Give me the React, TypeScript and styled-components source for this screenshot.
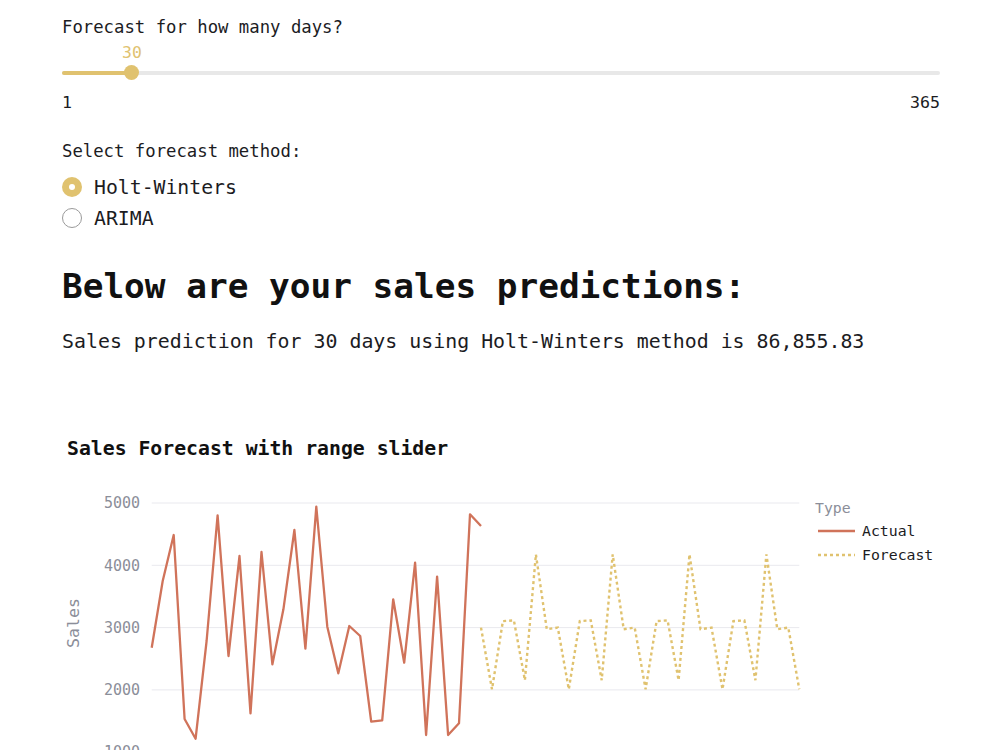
import * as React from 'react';
import styled, { createGlobalStyle } from 'styled-components';

const GOLD = '#e0c26f';
const RUST = '#d0735a';
const MONO = `'DejaVu Sans Mono', 'Liberation Mono', monospace`;

const GlobalStyle = createGlobalStyle`
  html, body {
    margin: 0;
    padding: 0;
    background: #ffffff;
    font-family: ${MONO};
    color: #1c1c1f;
  }
`;

const Main = styled.main`
  box-sizing: border-box;
  width: 1000px;
  padding: 0 60px 0 62px;
`;

const WidgetLabel = styled.div<{ $top: number }>`
  margin-top: ${p => p.$top}px;
  font-size: 17.3px;
  line-height: 22px;
  height: 22px;
  white-space: nowrap;
`;

const SliderArea = styled.div`
  position: relative;
  height: 54px;
  padding-top: 33px;
  box-sizing: border-box;
`;

const Track = styled.div`
  height: 4px;
  border-radius: 2px;
  background: #e8e8e8;
  display: flex;
`;

const TrackFill = styled.div`
  height: 100%;
  border-radius: 2px;
  background: ${GOLD};
`;

const Thumb = styled.div`
  position: absolute;
  top: 27px;
  width: 15px;
  height: 15px;
  margin-left: -7.5px;
  border-radius: 50%;
  background: ${GOLD};
`;

const ThumbValue = styled.div`
  position: absolute;
  top: 5px;
  transform: translateX(-50%);
  font-size: 16.4px;
  line-height: 20px;
  color: ${GOLD};
`;

const MinMax = styled.div`
  display: flex;
  justify-content: space-between;
  font-size: 16.6px;
  line-height: 20px;
  padding-top: 1px;
`;

const RadioGroup = styled.div`
  margin-top: 9.5px;
  display: flex;
  flex-direction: column;
`;

const RadioRow = styled.label`
  display: flex;
  align-items: center;
  height: 31px;
  gap: 12px;
  font-size: 19.8px;
`;

const RadioDot = styled.span<{ $checked: boolean }>`
  box-sizing: border-box;
  width: 20px;
  height: 20px;
  border-radius: 50%;
  display: flex;
  align-items: center;
  justify-content: center;
  border: ${p => (p.$checked ? 'none' : '1px solid #9a9a9a')};
  background: ${p => (p.$checked ? GOLD : '#ffffff')};
  &::after {
    content: '';
    display: ${p => (p.$checked ? 'block' : 'none')};
    width: 6px;
    height: 6px;
    border-radius: 50%;
    background: #ffffff;
  }
`;

const Heading = styled.h2`
  margin: 30.5px 0 0;
  font-size: 34.4px;
  line-height: 44px;
  font-weight: 700;
  color: #111111;
  white-space: nowrap;
`;

const Result = styled.p`
  margin: 20px 0 0;
  font-size: 19.9px;
  line-height: 28px;
  white-space: nowrap;
`;

const ChartTitle = styled.div`
  margin-top: 80px;
  padding-left: 5px;
  font-size: 19.8px;
  line-height: 26px;
  font-weight: 700;
  color: #111111;
`;

const ChartSvg = styled.svg`
  display: block;
  overflow: visible;
  font-family: ${MONO};
`;

const actual = [
  2677, 3748, 4486, 1533, 1217, 2785, 4803, 2544, 4149, 1624, 4213, 2411, 3294, 4567, 2661,
  4941, 3014, 2266, 3026, 2865, 1490, 1512, 3454, 2437, 4042, 1276, 3817, 1276, 1464, 4819, 4631,
];
const season = [3000, 2010, 3105, 3115, 2155, 4175, 2975];
const forecast = Array.from({ length: 30 }, (_, i) => season[i % 7]);

const LEFT = 89.7;
const RIGHT = 737.3;
const STEP = (RIGHT - LEFT) / 59;
const TOP = 41;
const PER = 0.0623;

const sx = (i: number) => LEFT + i * STEP;
const sy = (v: number) => TOP + (5000 - v) * PER;

const toPoints = (vals: number[], start: number) =>
  vals.map((v, i) => `${sx(start + i).toFixed(1)},${sy(v).toFixed(1)}`).join(' ');

const SalesChart = () => {
  const ticks = [5000, 4000, 3000, 2000, 1000];
  return (
    <ChartSvg width={878} height={300}>
      {ticks.map(t => (
        <g key={t}>
          <line x1={LEFT} x2={RIGHT} y1={sy(t)} y2={sy(t)} stroke="#e9e9ee" strokeWidth={1} />
          <text x={78} y={sy(t)} dy="0.35em" textAnchor="end" fontSize={15} fill="#8b8e99">
            {t}
          </text>
        </g>
      ))}
      <text
        x={11}
        y={161}
        transform="rotate(-90 11 161)"
        textAnchor="middle"
        dy="0.35em"
        fontSize={16.6}
        fill="#8b8e99"
      >
        Sales
      </text>
      <polyline points={toPoints(actual, 0)} fill="none" stroke={RUST} strokeWidth={2.3} strokeLinejoin="round" />
      <polyline
        points={toPoints(forecast, 30)}
        fill="none"
        stroke={GOLD}
        strokeWidth={2.4}
        strokeDasharray="3,3"
      />
      <g fontSize={14.8}>
        <text x={753} y={46} dy="0.35em" fill="#8b8e99">Type</text>
        <line x1={756} x2={793} y1={69} y2={69} stroke={RUST} strokeWidth={2.3} />
        <text x={800} y={69} dy="0.35em" fill="#1c1c1f">Actual</text>
        <line x1={756} x2={793} y1={93} y2={93} stroke={GOLD} strokeWidth={2.4} strokeDasharray="3,3" />
        <text x={800} y={93} dy="0.35em" fill="#1c1c1f">Forecast</text>
      </g>
    </ChartSvg>
  );
};

const DaysSlider = ({ value, min, max }: { value: number; min: number; max: number }) => {
  const pct = ((value - min) / (max - min)) * 100;
  return (
    <>
      <SliderArea>
        <ThumbValue style={{ left: `${pct}%` }}>{value}</ThumbValue>
        <Track>
          <TrackFill style={{ width: `${pct}%` }} />
        </Track>
        <Thumb style={{ left: `${pct}%` }} />
      </SliderArea>
      <MinMax>
        <span>{min}</span>
        <span>{max}</span>
      </MinMax>
    </>
  );
};

export default function App() {
  const methods = ['Holt-Winters', 'ARIMA'];
  return (
    <>
      <GlobalStyle />
      <Main>
        <WidgetLabel $top={16}>Forecast for how many days?</WidgetLabel>
        <DaysSlider value={30} min={1} max={365} />
        <WidgetLabel $top={27}>Select forecast method:</WidgetLabel>
        <RadioGroup>
          {methods.map((m, i) => (
            <RadioRow key={m}>
              <RadioDot $checked={i === 0} />
              {m}
            </RadioRow>
          ))}
        </RadioGroup>
        <Heading>Below are your sales predictions:</Heading>
        <Result>Sales prediction for 30 days using Holt-Winters method is 86,855.83</Result>
        <ChartTitle>Sales Forecast with range slider</ChartTitle>
        <SalesChart />
      </Main>
    </>
  );
}
